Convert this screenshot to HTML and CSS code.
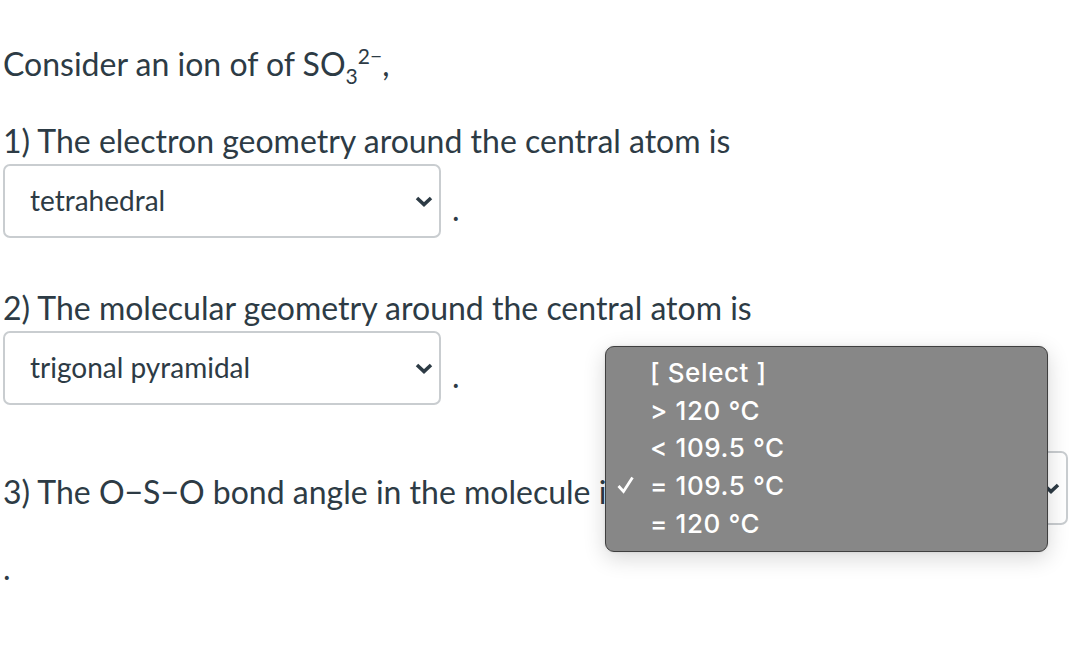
FILE: index.html
```html
<!DOCTYPE html>
<html>
<head>
<meta charset="utf-8">
<link rel="stylesheet" href="styles.css">
</head>
<body>
<div class="page">
  <p class="intro">Consider an ion of of SO<sub>3</sub><sup>2−</sup>,</p>

  <p class="q">1) The electron geometry around the central atom is</p>
  <div class="answer">
    <div class="select"><span>tetrahedral</span><svg class="chev" viewBox="0 0 18 11" width="18" height="11"><path d="M2 2 L9 8.5 L16 2" fill="none" stroke="#2d3b45" stroke-width="3.6"/></svg></div>
    <span class="dot">.</span>
  </div>

  <p class="q q2">2) The molecular geometry around the central atom is</p>
  <div class="answer">
    <div class="select"><span>trigonal pyramidal</span><svg class="chev" viewBox="0 0 18 11" width="18" height="11"><path d="M2 2 L9 8.5 L16 2" fill="none" stroke="#2d3b45" stroke-width="3.6"/></svg></div>
    <span class="dot">.</span>
  </div>

  <div class="q3row">
    <span class="q3text">3) The O−S−O bond angle in the molecule is</span>
    <div class="select select3"><span></span><svg class="chev" viewBox="0 0 18 11" width="18" height="11"><path d="M2 2 L9 8.5 L16 2" fill="none" stroke="#2d3b45" stroke-width="3.6"/></svg></div>
  </div>
  <p class="enddot">.</p>

  <div class="menu">
    <div class="opt">[ Select ]</div>
    <div class="opt">&gt; 120 °C</div>
    <div class="opt">&lt; 109.5 °C</div>
    <div class="opt"><svg class="tick" viewBox="0 0 17 18" width="17" height="18"><path d="M1.5 10 L6.5 15.5 L15.5 1.5" fill="none" stroke="#ffffff" stroke-width="2.8"/></svg>= 109.5 °C</div>
    <div class="opt">= 120 °C</div>
  </div>
</div>
</body>
</html>
```
FILE: styles.css
```css
html, body {
  margin: 0;
  padding: 0;
  background: #ffffff;
}
.page {
  position: relative;
  padding: 40px 0 0 3px;
  font-family: Lato, "Noto Sans", sans-serif;
  font-size: 32px;
  line-height: 48px;
  color: #2d3b45;
}
p { margin: 0; }
.intro sub, .intro sup {
  font-size: 21px;
  line-height: 0;
}
.intro sub { vertical-align: -8px; }
.intro sup { vertical-align: 12px; }
.q { margin-top: 29px; }
.q2 { margin-top: 46px; }
.answer {
  display: flex;
  align-items: flex-end;
  margin-top: -1px;
}
.select {
  box-sizing: border-box;
  width: 438px;
  height: 74px;
  border: 2px solid #c9cdd0;
  border-radius: 7px;
  display: flex;
  align-items: center;
  justify-content: space-between;
  padding: 0 6px 0 25px;
  font-size: 28px;
  line-height: 34px;
  color: #2d3b45;
  background: #fff;
}
.select span { margin-top: -2px; }
.chev { margin-top: 1px; }
.dot {
  margin-left: 11px;
  line-height: 32px;
  margin-bottom: 13px;
}
.q3row {
  display: flex;
  align-items: flex-start;
  margin-top: 46px;
}
.q3text { margin-top: 17px; }
.select3 { margin-left: 10px; }
.enddot { margin-top: 19px; }

.menu {
  position: absolute;
  left: 605px;
  top: 346px;
  width: 443px;
  height: 206px;
  box-sizing: border-box;
  background: #878787;
  border: 1px solid #3f3f3f;
  border-radius: 9px;
  box-shadow: 0 6px 22px rgba(0,0,0,0.16), 0 0 3px rgba(0,0,0,0.1);
  padding: 7px 0 0 44px;
  font-family: Inter, "Liberation Sans", sans-serif;
  font-size: 26px;
  line-height: 37.7px;
  letter-spacing: 0.6px;
  color: #ffffff;
  font-weight: 500;
}
.opt { position: relative; }
.tick {
  position: absolute;
  left: -33px;
  top: 9px;
}
```
